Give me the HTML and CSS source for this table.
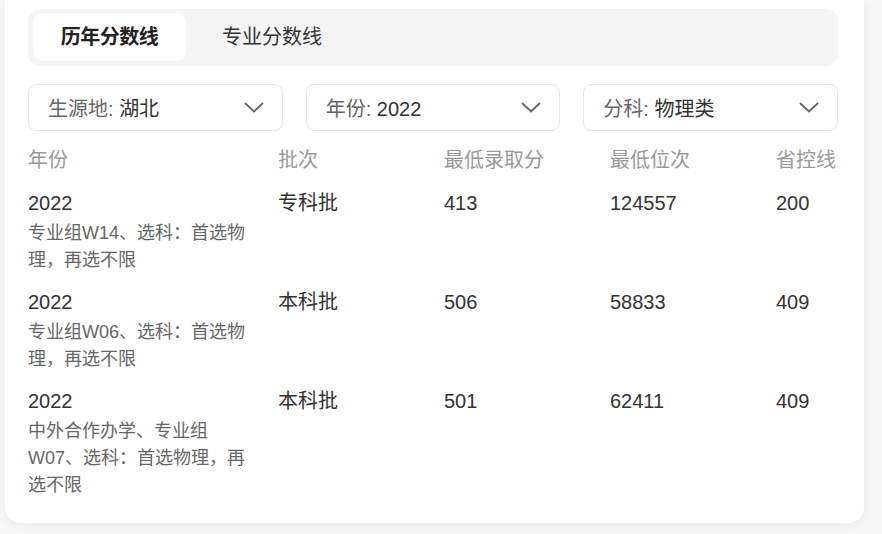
FILE: index.html
```html
<!DOCTYPE html>
<html lang="zh-CN">
<head>
<meta charset="utf-8">
<title>历年分数线</title>
<link rel="stylesheet" href="styles.css">
</head>
<body>
<div class="card">
  <div class="tabs">
    <div class="tab tab-active">历年分数线</div>
    <div class="tab">专业分数线</div>
  </div>
  <div class="filters">
    <div class="select"><span class="sel-text"><span class="sel-label">生源地:</span> <span class="sel-value">湖北</span></span><svg class="chev" width="20" height="11" viewBox="0 0 20 11"><path d="M1 1 L10 9.5 L19 1" fill="none" stroke="#666" stroke-width="1.8"/></svg></div>
    <div class="select"><span class="sel-text"><span class="sel-label">年份:</span> <span class="sel-value">2022</span></span><svg class="chev" width="20" height="11" viewBox="0 0 20 11"><path d="M1 1 L10 9.5 L19 1" fill="none" stroke="#666" stroke-width="1.8"/></svg></div>
    <div class="select"><span class="sel-text"><span class="sel-label">分科:</span> <span class="sel-value">物理类</span></span><svg class="chev" width="20" height="11" viewBox="0 0 20 11"><path d="M1 1 L10 9.5 L19 1" fill="none" stroke="#666" stroke-width="1.8"/></svg></div>
  </div>
  <div class="table">
    <div class="row head">
      <div>年份</div><div>批次</div><div>最低录取分</div><div>最低位次</div><div>省控线</div>
    </div>
    <div class="row">
      <div class="c-year"><div class="main">2022</div><div class="sub">专业组W14、选科：首选物理，再选不限</div></div>
      <div class="main">专科批</div><div class="main">413</div><div class="main">124557</div><div class="main">200</div>
    </div>
    <div class="row">
      <div class="c-year"><div class="main">2022</div><div class="sub">专业组W06、选科：首选物理，再选不限</div></div>
      <div class="main">本科批</div><div class="main">506</div><div class="main">58833</div><div class="main">409</div>
    </div>
    <div class="row">
      <div class="c-year"><div class="main">2022</div><div class="sub">中外合作办学、专业组W07、选科：首选物理，再选不限</div></div>
      <div class="main">本科批</div><div class="main">501</div><div class="main">62411</div><div class="main">409</div>
    </div>
  </div>
</div>
</body>
</html>
```
FILE: styles.css
```css
* { box-sizing: border-box; }
html, body { margin: 0; padding: 0; }
body {
  background: #f7f7f7;
  font-family: "Liberation Sans", "Noto Sans CJK SC", sans-serif;
  color: #333;
  width: 882px;
  height: 534px;
  overflow: hidden;
}
.card {
  margin: 0 18px 0 5px;
  background: #fff;
  border-radius: 0 0 16px 16px;
  padding: 9px 26px 24px 23px;
  box-shadow: 0 2px 12px rgba(0, 0, 0, 0.06);
}
.tabs {
  display: flex;
  gap: 8px;
  background: #f4f4f4;
  border-radius: 12px;
  padding: 4px 5px 5px 5px;
}
.tab {
  height: 48px;
  line-height: 48px;
  padding: 0 28px;
  font-size: 20px;
  color: #333;
  border-radius: 10px;
  white-space: nowrap;
}
.tab-active {
  width: 153px;
  padding: 0;
  text-align: center;
  background: #fff;
  font-weight: bold;
  color: #222;
  letter-spacing: -0.5px;
}
.filters {
  display: grid;
  grid-template-columns: 1fr 1fr 1fr;
  gap: 23px;
  margin-top: 18px;
}
.select {
  height: 47px;
  border: 1px solid #e6e6e6;
  border-radius: 8px;
  padding: 0 18px 0 19px;
  display: flex;
  align-items: center;
  justify-content: space-between;
  font-size: 20px;
}
.sel-label { color: #666; }
.sel-value { color: #333; }
.chev { display: block; }
.table { margin-top: 14px; }
.row {
  display: grid;
  grid-template-columns: 250px 166px 166px 166px 1fr;
  padding-top: 12px;
}
.row.head {
  padding-top: 0;
  font-size: 20px;
  line-height: 30px;
  color: #999;
  white-space: nowrap;
}
.main {
  font-size: 20px;
  line-height: 33px;
  color: #333;
}
.c-year { padding-right: 20px; }
.sub {
  font-size: 18px;
  line-height: 27px;
  color: #666;
}
```
